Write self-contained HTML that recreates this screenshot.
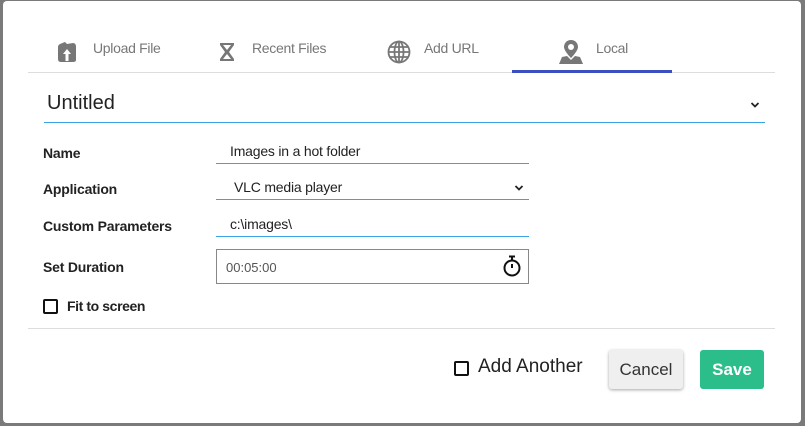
<!DOCTYPE html>
<html><head><meta charset="utf-8"><style>
*{box-sizing:border-box;margin:0;padding:0}
body{width:805px;height:426px;background:#7a7a7a;position:relative;overflow:hidden;font-family:"Liberation Sans",sans-serif}
.dlg{position:absolute;left:3px;top:1px;width:798px;height:422px;background:#fff;border-radius:4px}
.c{position:absolute;left:0;top:0;width:805px;height:426px}
.tab{position:absolute;top:40px;font-size:14px;color:#777;letter-spacing:-0.3px}
.ic{position:absolute;top:38px}
.lbl{position:absolute;left:43px;font-size:14px;font-weight:bold;color:#222;letter-spacing:-0.2px}
.inp{position:absolute;left:216px;width:313px;font-size:14px;color:#222;border-bottom:1px solid #3aa3e3;height:26px;padding-left:14px;padding-top:5px;letter-spacing:-0.2px}
</style></head><body>
<div class="dlg"></div>
<div class="c">
<svg class="ic" style="left:57px;top:41px" width="20" height="22" viewBox="0 0 20 22"><path d="M3 3 L8 1 L10 3 L16 2 Q19 2 19 6 L19 19 Q19 21 16 21 L4 21 Q1 21 1 18 L1 6 Q1 4 3 3Z" fill="#777"/><path d="M10 8 L6 13 L8.5 13 L8.5 20 L11.5 20 L11.5 13 L14 13Z" fill="#fff"/></svg>
<div class="tab" style="left:93px">Upload File</div>
<svg class="ic" style="left:219px;top:42px" width="16" height="20" viewBox="0 0 16 20"><path d="M1 1H15V3L10 10L15 17V19H1V17L6 10L1 3Z" fill="#777"/><path d="M4 3H12L8 8Z M4 17H12L8 12Z" fill="#fff"/></svg>
<div class="tab" style="left:252px">Recent Files</div>
<svg class="ic" style="left:387px;top:40px" width="24" height="24" viewBox="0 0 24 24" fill="none" stroke="#777" stroke-width="1.8"><circle cx="12" cy="12" r="10.5"/><ellipse cx="12" cy="12" rx="4.5" ry="10.5"/><path d="M1.5 12H22.5M3 7H21M3 17H21M12 1.5V22.5"/></svg>
<div class="tab" style="left:424px">Add URL</div>
<svg class="ic" style="left:558px;top:39px" width="26" height="26" viewBox="0 0 26 26"><path d="M13 1 C8.5 1 6 4.5 6 8 C6 12 13 19 13 19 C13 19 20 12 20 8 C20 4.5 17.5 1 13 1Z" fill="#777"/><circle cx="13" cy="8" r="3" fill="#fff"/><path d="M4 18 L9 17 L13 21 L17 17 L22 18 L25 25 L1 25Z" fill="#777"/></svg>
<div class="tab" style="left:596px">Local</div>
<div style="position:absolute;left:28px;top:72px;width:747px;height:1px;background:#ddd"></div>
<div style="position:absolute;left:512px;top:70px;width:160px;height:3px;background:#3b4fbf"></div>
<div style="position:absolute;left:47px;top:92px;font-size:20px;color:#222">Untitled</div>
<svg style="position:absolute;left:750px;top:101px" width="10" height="8" viewBox="0 0 10 8"><path d="M1.5 2L5 5.5L8.5 2" stroke="#222" stroke-width="1.8" fill="none"/></svg>
<div style="position:absolute;left:44px;top:122px;width:721px;height:1px;background:#3aa3e3"></div>
<div class="lbl" style="top:145px">Name</div>
<div class="inp" style="top:138px">Images in a hot folder</div>
<div class="lbl" style="top:181px">Application</div>
<div class="inp" style="top:174px;padding-left:18px">VLC media player</div>
<svg style="position:absolute;left:514px;top:184px" width="10" height="8" viewBox="0 0 10 8"><path d="M1.5 2L5 5.5L8.5 2" stroke="#222" stroke-width="1.8" fill="none"/></svg>
<div class="lbl" style="top:218px">Custom Parameters</div>
<div class="inp" style="top:211px">c:\images\</div>
<div class="lbl" style="top:259px">Set Duration</div>
<div style="position:absolute;left:216px;top:249px;width:313px;height:35px;border:1px solid #888;font-size:13px;color:#555;padding:10px 0 0 9px">00:05:00</div>
<svg style="position:absolute;left:502px;top:255px" width="20" height="22" viewBox="0 0 20 22" fill="none" stroke="#111" stroke-width="2"><path d="M7 1.5H13M10 2V5"/><circle cx="10" cy="13" r="7.5"/><path d="M10 13V9"/></svg>
<div style="position:absolute;left:43px;top:299px;width:15px;height:15px;border:2px solid #111;border-radius:2px"></div>
<div class="lbl" style="left:67px;top:298px;letter-spacing:-0.4px">Fit to screen</div>
<div style="position:absolute;left:28px;top:328px;width:747px;height:1px;background:#ddd"></div>
<div style="position:absolute;left:454px;top:361px;width:15px;height:15px;border:2px solid #111;border-radius:2px"></div>
<div style="position:absolute;left:478px;top:356px;font-size:19px;color:#222">Add Another</div>
<div style="position:absolute;left:609px;top:350px;width:74px;height:39px;background:#efefef;border-radius:3px;box-shadow:0 1px 3px rgba(0,0,0,.35);font-size:17px;color:#333;text-align:center;line-height:39px">Cancel</div>
<div style="position:absolute;left:700px;top:350px;width:64px;height:39px;background:#2bbd8a;border-radius:3px;font-size:17px;font-weight:bold;color:#fff;text-align:center;line-height:39px">Save</div>
</div>
</body></html>
